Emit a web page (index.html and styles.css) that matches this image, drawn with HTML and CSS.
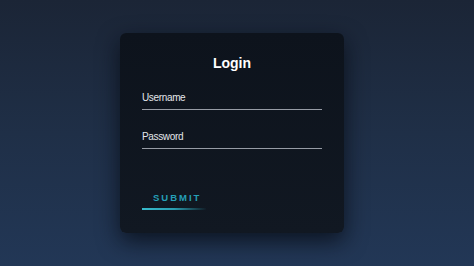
FILE: index.html
```html
<!DOCTYPE html>
<html lang="en">
<head>
<meta charset="utf-8">
<title>Login</title>
<link rel="stylesheet" href="styles.css">
</head>
<body>
  <div class="card">
    <h1 class="title">Login</h1>
    <div class="field"><span class="label">Username</span></div>
    <div class="field field-second"><span class="label">Password</span></div>
    <div class="submit">SUBMIT</div>
  </div>
</body>
</html>
```
FILE: styles.css
```css
html, body {
  margin: 0;
  height: 100%;
}
body {
  background: linear-gradient(180deg, #1b2536 0%, #1f2f47 50%, #223756 100%);
  font-family: "Liberation Sans", Arial, sans-serif;
  padding: 33px 0 0 120px;
  box-sizing: border-box;
}
.card {
  width: 224px;
  height: 200px;
  box-sizing: border-box;
  background: linear-gradient(180deg, #0d131c 0%, #111822 100%);
  border-radius: 6px;
  box-shadow: 0 8px 22px rgba(5, 10, 18, 0.75);
  padding: 22px 22px 0 22px;
  display: flex;
  flex-direction: column;
}
.title {
  margin: 0;
  font-size: 14px;
  line-height: 16px;
  font-weight: bold;
  color: #ffffff;
  text-align: center;
}
.field {
  margin-top: 21px;
  width: 180px;
  padding-bottom: 5px;
  border-bottom: 1px solid #979ca5;
}
.field-second {
  margin-top: 21px;
}
.label {
  display: block;
  font-size: 10px;
  line-height: 12px;
  color: #e3e6ea;
  letter-spacing: -0.35px;
}
.submit {
  margin-top: 43px;
  width: 64px;
  box-sizing: border-box;
  padding: 0 0 4px 11px;
  font-size: 9.5px;
  line-height: 12px;
  font-weight: bold;
  letter-spacing: 2px;
  color: #259fb6;
  border-bottom: 2px solid transparent;
  border-image: linear-gradient(90deg, #38bccd 0%, #2a9db0 50%, rgba(40, 150, 170, 0) 100%) 1;
}
```
